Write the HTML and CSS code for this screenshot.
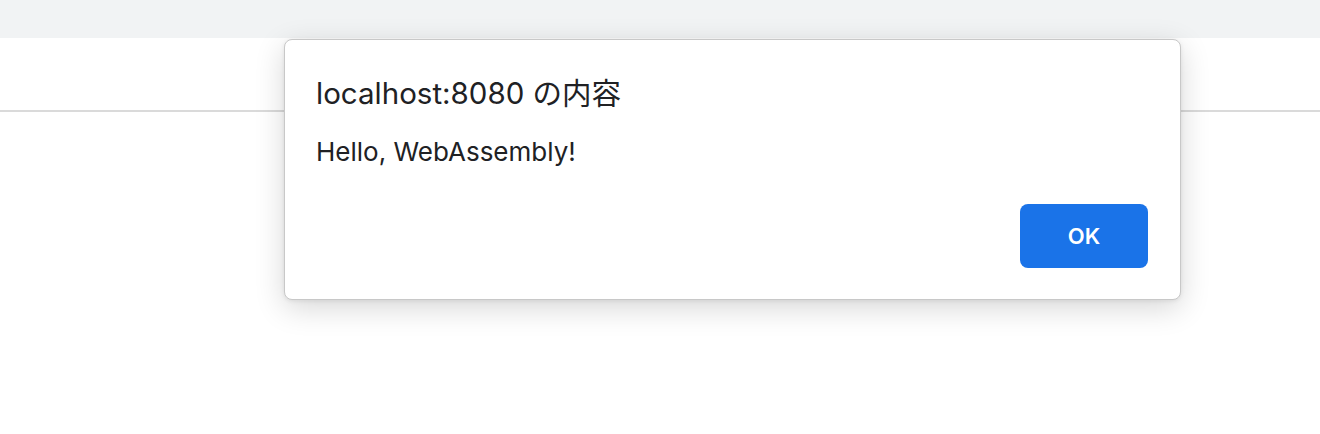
FILE: index.html
```html
<!DOCTYPE html>
<html lang="ja">
<head>
<meta charset="utf-8">
<title>localhost:8080</title>
<link rel="stylesheet" href="styles.css">
</head>
<body>
  <div class="toolbar"></div>
  <div class="page-header"></div>
  <div class="page-body"></div>

  <div class="dialog" role="alertdialog">
    <div class="dialog-title">localhost:8080 の内容</div>
    <div class="dialog-message">Hello, WebAssembly!</div>
    <div class="dialog-actions">
      <button class="btn-ok">OK</button>
    </div>
  </div>
</body>
</html>
```

FILE: styles.css
```css
html, body {
  margin: 0;
  padding: 0;
  background: #ffffff;
  font-family: Inter, "Noto Sans CJK JP", sans-serif;
}

.toolbar {
  height: 38px;
  background: #f1f3f4;
}

.page-header {
  height: 72px;
  border-bottom: 2px solid #dadada;
}

.page-body {
  height: 322px;
}

.dialog {
  position: absolute;
  left: 284px;
  top: 39px;
  width: 897px;
  height: 261px;
  box-sizing: border-box;
  background: #ffffff;
  border: 1px solid #c8c8c8;
  border-radius: 8px;
  box-shadow: 0 8px 30px rgba(0, 0, 0, 0.16), 0 1px 4px rgba(0, 0, 0, 0.08);
  padding: 35px 32px 31px 31px;
  display: flex;
  flex-direction: column;
}

.dialog-title {
  font-size: 29.5px;
  line-height: 36px;
  color: #202124;
}

.dialog-message {
  margin-top: 25px;
  font-size: 26px;
  line-height: 32px;
  color: #202124;
}

.dialog-actions {
  margin-top: 36px;
  display: flex;
  justify-content: flex-end;
}

.btn-ok {
  width: 128px;
  height: 64px;
  border: none;
  border-radius: 8px;
  background: #1a73e8;
  color: #ffffff;
  font-family: Inter, sans-serif;
  font-size: 22px;
  font-weight: 600;
  padding: 0;
}
```
